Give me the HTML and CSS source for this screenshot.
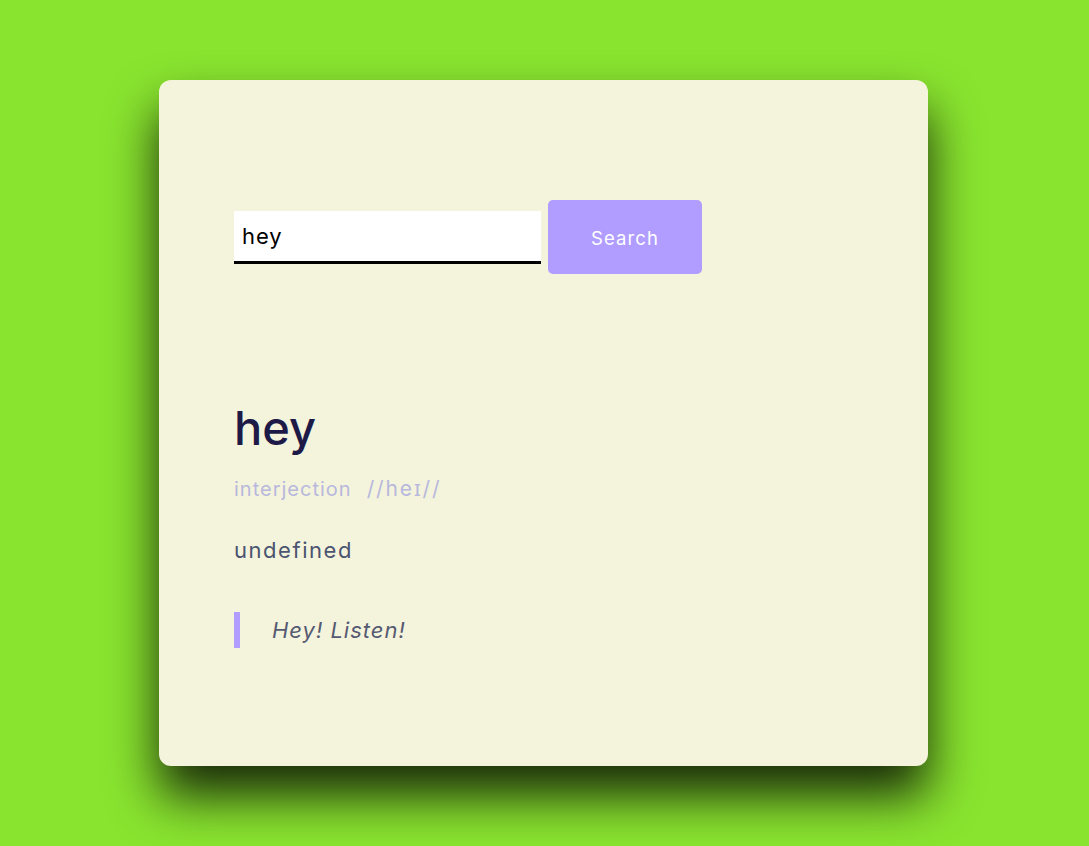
FILE: index.html
```html
<!DOCTYPE html>
<html lang="en">
<head>
<meta charset="utf-8">
<title>Dictionary</title>
<link rel="stylesheet" href="styles.css">
</head>
<body>
<main class="page">
  <section class="card">
    <form class="search">
      <input class="search-input" type="text" value="hey">
      <button class="search-btn" type="button">Search</button>
    </form>
    <article class="entry">
      <h1 class="word">hey</h1>
      <p class="meta"><span class="pos">interjection</span><span class="phon">//heɪ//</span></p>
      <p class="definition">undefined</p>
      <blockquote class="example">Hey! Listen!</blockquote>
    </article>
  </section>
</main>
</body>
</html>
```
FILE: styles.css
```css
* { box-sizing: border-box; }
html, body { margin: 0; padding: 0; }
body {
  background: #89e42f;
  font-family: "Inter", "Noto Sans", sans-serif;
  min-height: 846px;
  overflow: hidden;
}
.page {
  display: flex;
  justify-content: center;
  padding-top: 80px;
  padding-right: 2px;
}
.card {
  width: 769px;
  height: 686px;
  background: #f4f3dc;
  border-radius: 12px;
  box-shadow: 0 30px 50px rgba(0, 0, 0, 0.82);
  padding: 120px 75px 0 75px;
}
.search {
  display: flex;
  align-items: center;
  gap: 7px;
}
.search-input {
  width: 307px;
  height: 53px;
  border: none;
  border-bottom: 3px solid #000;
  background: #fff;
  padding: 0 8px;
  font-family: inherit;
  font-size: 22px;
  letter-spacing: 0.04em;
  color: #000;
  outline: none;
}
.search-btn {
  width: 154px;
  height: 74px;
  border: none;
  border-radius: 5px;
  background: #b09dff;
  color: #fff;
  font-family: inherit;
  font-size: 18.5px;
  letter-spacing: 0.06em;
  padding: 2px 0 0 0;
}
.entry {
  margin-top: 124px;
}
.word {
  margin: 0;
  font-size: 47px;
  font-weight: 500;
  color: #1e1a47;
  line-height: 60px;
}
.meta {
  margin: 16px 0 0 0;
  font-size: 20px;
  letter-spacing: 0.05em;
  color: #b8b8dd;
  display: flex;
  align-items: baseline;
  gap: 15px;
}
.phon {
  font-size: 21px;
  letter-spacing: 0.09em;
}
.definition {
  margin: 35px 0 0 0;
  font-size: 22px;
  letter-spacing: 0.07em;
  color: #4b5470;
}
.example {
  margin: 49px 0 0 0;
  border-left: 6px solid #b09dff;
  padding: 5px 0 5px 32px;
  font-size: 22px;
  letter-spacing: 0.045em;
  font-style: italic;
  color: #555a72;
}
```
